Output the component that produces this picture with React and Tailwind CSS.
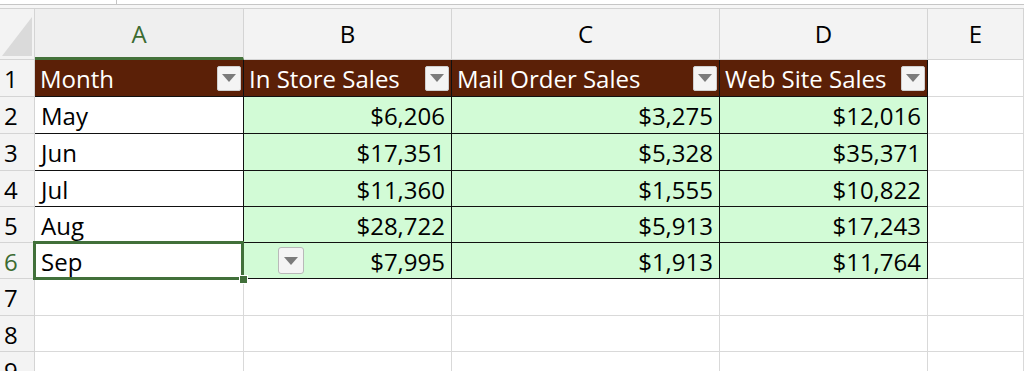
import React from "react";

const headers = ["Month", "In Store Sales", "Mail Order Sales", "Web Site Sales"];

const rows = [
  ["May", "$6,206", "$3,275", "$12,016"],
  ["Jun", "$17,351", "$5,328", "$35,371"],
  ["Jul", "$11,360", "$1,555", "$10,822"],
  ["Aug", "$28,722", "$5,913", "$17,243"],
  ["Sep", "$7,995", "$1,913", "$11,764"],
];

const letters = ["A", "B", "C", "D", "E"];

// little filter button with a grey triangle
const DropButton = ({ big }) => (
  <div
    className={
      big
        ? "w-[26px] h-[27px] bg-[#f4f4f4] border border-[#b9b9b9] rounded-[3px] flex items-center justify-center"
        : "w-[24px] h-[25px] bg-[#f4f4f4] border border-[#cfcfcf] rounded-[2px] flex items-center justify-center"
    }
  >
    <svg width="14" height="8" viewBox="0 0 14 8">
      <polygon points="0,0 14,0 7,8" fill="#7b7b7b" />
    </svg>
  </div>
);

const App = () => {
  const cellBase = "border-r border-b border-[#d9d9d9]";

  return (
    <div
      className="w-[1024px] h-[371px] overflow-hidden bg-white text-black"
      style={{ fontFamily: '"Open Sans", sans-serif' }}
    >
      {/* top strip */}
      <div className="h-[9px] flex flex-col">
        <div className="h-[4px] bg-white flex">
          <div className="w-[117px] border-r border-[#c4c4c4]" />
        </div>
        <div className="h-[1px] bg-[#c6c6c6]" />
        <div className="h-[3px] bg-[#f6f6f6]" />
        <div className="h-[1px] bg-[#d2d2d2]" />
      </div>

      <div className="grid grid-cols-[35px_209px_208px_268px_208px_1fr] grid-rows-[51px_37px_37px_37px_36px_36px_36px_37px_36px_36px] text-[24px]">
        {/* corner */}
        <div className="bg-[#f3f3f3] border-r border-b border-[#d4d4d4] relative">
          <svg className="absolute left-0 top-0" width="35" height="51" viewBox="0 0 35 51">
            <polygon points="2,47 32,47 32,8" fill="#dadada" />
          </svg>
        </div>

        {/* column letters */}
        {letters.map((l, i) => (
          <div
            key={l}
            className={
              i === 0
                ? "bg-[#efefef] border-r border-[#d4d4d4] border-b-[3px] border-b-[#44723a] flex items-center justify-center pt-[2px] text-[#3c6b31]"
                : "bg-[#f3f3f3] border-r border-b border-[#d4d4d4] flex items-center justify-center"
            }
          >
            {l}
          </div>
        ))}

        {/* row 1 headers */}
        <div className="bg-[#f3f3f3] border-r border-b border-[#d4d4d4] flex items-center pl-[4px] pt-[2px]">
          1
        </div>
        {headers.map((h) => (
          <div
            key={h}
            className="bg-[#5b2007] border-r border-b border-[#111] flex items-center justify-between pl-[5px] pr-[2px] text-white"
          >
            <span className="pt-[2px]">{h}</span>
            <DropButton />
          </div>
        ))}
        <div className={cellBase} />

        {/* data rows */}
        {rows.map((r, ri) => {
          const selected = ri === 4;
          return (
            <React.Fragment key={r[0]}>
              <div
                className={
                  "bg-[#f3f3f3] border-r border-b border-[#d4d4d4] flex items-center pl-[4px] pt-[2px] " +
                  (selected ? "text-[#3c6b31]" : "")
                }
              >
                {ri + 2}
              </div>
              <div className="relative bg-white border-r border-b border-[#111] flex items-center pl-[6px] pt-[2px]">
                {r[0]}
                {selected && (
                  <>
                    <div className="absolute z-10 -left-[2px] -top-[2px] -right-[1px] -bottom-[2px] border-[3px] border-[#41703a]" />
                    <div className="absolute z-10 -right-[5px] -bottom-[6px] w-[9px] h-[9px] bg-[#41703a] border border-white" />
                  </>
                )}
              </div>
              {r.slice(1).map((v, ci) => (
                <div
                  key={ci}
                  className="relative bg-[#d2fbd6] border-r border-b border-[#111] flex items-center justify-end pr-[6px] pt-[2px]"
                >
                  {selected && ci === 0 && (
                    <div className="absolute left-[34px] top-[4px]">
                      <DropButton big />
                    </div>
                  )}
                  {v}
                </div>
              ))}
              <div className={cellBase} />
            </React.Fragment>
          );
        })}

        {/* empty rows */}
        {[7, 8, 9].map((n) => (
          <React.Fragment key={n}>
            <div className="bg-[#f3f3f3] border-r border-b border-[#d4d4d4] flex items-center pl-[4px] pt-[2px]">
              {n}
            </div>
            {[0, 1, 2, 3, 4].map((c) => (
              <div key={c} className={cellBase} />
            ))}
          </React.Fragment>
        ))}
      </div>
    </div>
  );
};

export default App;
